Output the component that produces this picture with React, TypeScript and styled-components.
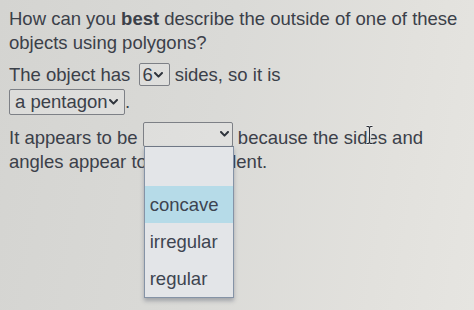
import React from "react";
import styled, { createGlobalStyle } from "styled-components";

const GlobalStyle = createGlobalStyle`
  html, body { margin: 0; padding: 0; }
  body {
    width: 474px;
    height: 310px;
    overflow: hidden;
    background: linear-gradient(100deg, #d4d4d1 0%, #dadad7 45%, #e2e1dd 80%, #e6e5e1 100%);
    font-family: "Liberation Sans", Arial, sans-serif;
    color: #3b4049;
  }
`;

const Page = styled.div`
  position: relative;
  padding: 7px 8px 0 9px;
  font-size: 18.5px;
`;

const Question = styled.p`
  margin: 0;
  line-height: 24px;
`;

const Line = styled.div<{ $h: number; $mt?: number }>`
  line-height: ${(p) => p.$h}px;
  margin-top: ${(p) => p.$mt ?? 0}px;
  white-space: nowrap;
`;

const SelectBox = styled.span<{ $w: number; $h: number; $pad: number; $ml?: number; $raise?: number }>`
  position: relative;
  display: inline-block;
  box-sizing: border-box;
  width: ${(p) => p.$w}px;
  height: ${(p) => p.$h}px;
  margin-left: ${(p) => p.$ml ?? 0}px;
  line-height: ${(p) => p.$h - 2}px;
  padding-left: ${(p) => p.$pad}px;
  border: 1px solid #7d8086;
  border-radius: 2px;
  background: rgba(236, 236, 234, 0.35);
  vertical-align: ${(p) => p.$raise ?? 0}px;
  white-space: nowrap;
`;

const Chevron = styled.svg<{ $right?: boolean }>`
  display: inline-block;
  width: 9px;
  height: 6px;
  margin-left: 1px;
  vertical-align: 3px;
  ${(p) => (p.$right ? "position: absolute; right: 3px; top: 8px; margin: 0;" : "")}
`;

const List = styled.div`
  position: absolute;
  left: 0;
  top: 100%;
  width: 90px;
  box-sizing: border-box;
  border: 1px solid #8593a6;
  border-top-color: #6f7785;
  background: #e3e5e8;
  box-shadow: 0 3px 4px rgba(60, 70, 90, 0.35);
  z-index: 2;
  line-height: 20px;
`;

const Option = styled.div<{ $active?: boolean; $h: number }>`
  height: ${(p) => p.$h}px;
  display: flex;
  align-items: center;
  padding-left: 5px;
  background: ${(p) => (p.$active ? "#b6dbe8" : "transparent")};
  color: #3d4450;
`;

const Cursor = styled.svg`
  position: absolute;
  left: 365px;
  top: 125px;
  width: 9px;
  height: 20px;
  z-index: 3;
`;

const Chev = ({ right }: { right?: boolean }) => (
  <Chevron viewBox="0 0 9 6" $right={right}>
    <path d="M1 1 L4.5 4.6 L8 1" fill="none" stroke="#2f343c" strokeWidth="2" strokeLinecap="round" strokeLinejoin="round" />
  </Chevron>
);

export default function App() {
  return (
    <>
      <GlobalStyle />
      <Page>
        <Question>
          How can you <b>best</b> describe the outside of one of these objects using polygons?
        </Question>
        <Line $h={27} $mt={6}>
          The object has{" "}
          <SelectBox $w={31} $h={23} $pad={3} $ml={3}>
            6<Chev />
          </SelectBox>{" "}
          sides, so it is
        </Line>
        <Line $h={27}>
          <SelectBox $w={116} $h={26} $pad={5}>
            a pentagon<Chev />
          </SelectBox>
          .
        </Line>
        <Line $h={24} $mt={7}>
          It appears to be{" "}
          <SelectBox $w={90} $h={25} $pad={5} $raise={3}>
            &nbsp;
            <Chev right />
            <List>
              <Option $h={39} />
              <Option $h={37} $active>concave</Option>
              <Option $h={38}>irregular</Option>
              <Option $h={36}>regular</Option>
            </List>
          </SelectBox>{" "}
          because the sides and
        </Line>
        <Line $h={23}>angles appear to be equivalent.</Line>
        <Cursor viewBox="0 0 9 20">
          <path d="M1.5 1.5 H3.5 L4.5 2.5 L5.5 1.5 H7.5 M4.5 2.5 V17.5 M1.5 18.5 H3.5 L4.5 17.5 L5.5 18.5 H7.5 M2.5 10 H6.5" fill="none" stroke="#f2f2f2" strokeWidth="2.6" />
          <path d="M1.5 1.5 H3.5 L4.5 2.5 L5.5 1.5 H7.5 M4.5 2.5 V17.5 M1.5 18.5 H3.5 L4.5 17.5 L5.5 18.5 H7.5" fill="none" stroke="#2b2f36" strokeWidth="1.1" />
        </Cursor>
      </Page>
    </>
  );
}
